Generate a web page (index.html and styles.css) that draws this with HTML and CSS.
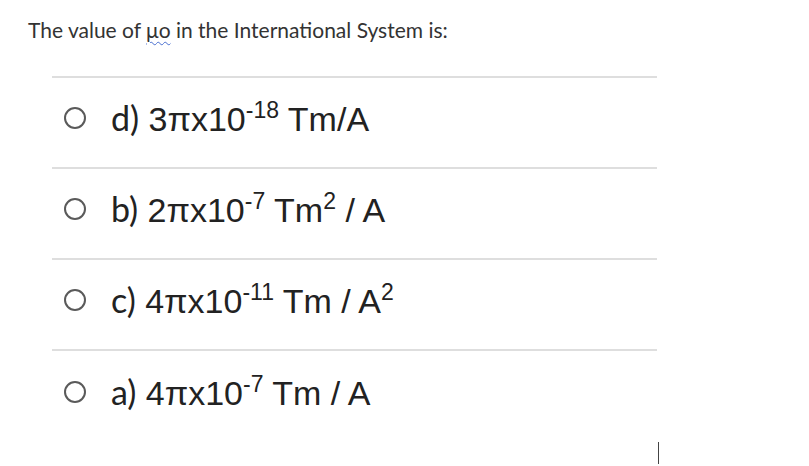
FILE: index.html
```html
<!DOCTYPE html>
<html>
<head>
<meta charset="utf-8">
<link rel="stylesheet" href="styles.css">
</head>
<body>
<div class="page">
  <p class="question">The value of <span class="spell">μo</span> in the International System is:</p>
  <div class="options">
    <div class="option"><span class="radio"></span><span class="label"><span class="letter">d)</span> 3πx10<sup>-18</sup> Tm/A</span></div>
    <div class="option"><span class="radio"></span><span class="label"><span class="letter">b)</span> 2πx10<sup>-7</sup> Tm<sup>2</sup> / A</span></div>
    <div class="option"><span class="radio"></span><span class="label"><span class="letter">c)</span> 4πx10<sup>-11</sup> Tm / A<sup>2</sup></span></div>
    <div class="option"><span class="radio"></span><span class="label"><span class="letter">a)</span> 4πx10<sup>-7</sup> Tm / A</span></div>
  </div>
  <div class="caret-row"><span class="caret"></span></div>
</div>
</body>
</html>
```
FILE: styles.css
```css
html, body {
  margin: 0;
  padding: 0;
  background: #fff;
}
.page {
  width: 809px;
  height: 466px;
  overflow: hidden;
}
.question {
  margin: 0;
  padding: 16px 0 0 28px;
  height: 58px;
  box-sizing: border-box;
  font-family: Lato, "Open Sans", sans-serif;
  font-size: 21px;
  line-height: 28px;
  color: #333;
}
.spell {
  text-decoration: underline wavy #4a6fd0;
  text-decoration-thickness: 1px;
  text-underline-offset: 3px;
}
.options {
  margin-top: 18px;
  margin-left: 52px;
  width: 605px;
}
.option {
  border-top: 2px solid #dedede;
  height: 91px;
  box-sizing: border-box;
  display: flex;
  align-items: center;
  padding-left: 12px;
  padding-bottom: 10px;
}
.option:last-child {
  height: 93px;
}
.radio {
  width: 18px;
  height: 18px;
  border: 2px solid #5a5a5a;
  border-radius: 50%;
  flex: none;
}
.label {
  margin-left: 25px;
  font-family: "Liberation Sans", Arial, sans-serif;
  font-size: 34px;
  color: #222;
  white-space: nowrap;
}
.letter {
  font-family: Lato, sans-serif;
}
sup {
  font-size: 23px;
  vertical-align: 0;
  position: relative;
  top: -13px;
}
.caret-row {
  padding-left: 658px;
}
.caret {
  display: block;
  width: 1px;
  height: 22px;
  background: #444;
}
```
